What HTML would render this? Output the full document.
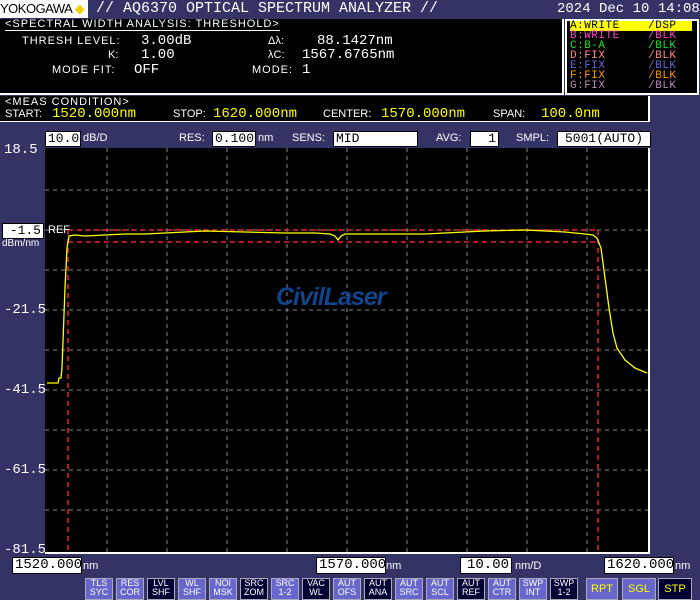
<!DOCTYPE html><html><head><style>
body{margin:0;width:700px;height:600px;background:#333366;position:relative;overflow:hidden;font-family:"Liberation Mono",monospace;color:#fff}
.a{position:absolute;white-space:pre}
.box{position:absolute;background:#fff;color:#000;border:1px solid #000;font-size:13px;line-height:14px;text-align:right;padding:0 2px}
.s{font-family:"Liberation Sans",sans-serif;font-size:11px}
.btn{position:absolute;top:578px;width:26px;height:20px;background:#6666cc;border:1px solid #aab;color:#fff;font-family:"Liberation Sans",sans-serif;font-size:9px;line-height:9px;text-align:center}
.d{background:#000033}
.y{color:#ffff00}
.lg div{height:10px;line-height:10px;font-family:"Liberation Mono",monospace;font-size:11px;letter-spacing:0.5px;white-space:pre}
</style></head><body>
<div class="a" style="left:0;top:0;width:88px;height:18px;background:#fff;color:#000;font-family:'Liberation Sans',sans-serif;font-size:13px;line-height:18px;letter-spacing:-0.5px">YOKOGAWA <span style="color:#f5d000">◆</span></div>
<div class="a" style="left:96px;top:0px;font-size:15px;line-height:18px">// AQ6370 OPTICAL SPECTRUM ANALYZER //</div>
<div class="a" style="left:557px;top:0px;font-size:14px;line-height:18px;letter-spacing:0px">2024 Dec 10 14:08</div>
<div class="a" style="left:0;top:19px;width:562px;height:74px;background:#000;border-right:2px solid #fff;border-bottom:2px solid #fff"></div>
<div class="a s" style="left:5px;top:18px;border-bottom:1px solid #fff;letter-spacing:1px">&lt;SPECTRAL WIDTH ANALYSIS: THRESHOLD&gt;</div>
<div class="a s" style="left:22px;top:35px;letter-spacing:1px">THRESH LEVEL:</div>
<div class="a" style="left:141px;top:33px;font-size:14px">3.00dB</div>
<div class="a s" style="left:108px;top:49px">K:</div>
<div class="a" style="left:141px;top:47px;font-size:14px">1.00</div>
<div class="a s" style="left:52px;top:64px;letter-spacing:1px">MODE FIT:</div>
<div class="a" style="left:134px;top:62px;font-size:14px">OFF</div>
<div class="a s" style="left:268px;top:35px">Δλ:</div>
<div class="a" style="left:317px;top:33px;font-size:14px">88.1427nm</div>
<div class="a s" style="left:268px;top:49px">λC:</div>
<div class="a" style="left:302px;top:47px;font-size:14px">1567.6765nm</div>
<div class="a s" style="left:252px;top:64px;letter-spacing:1px">MODE:</div>
<div class="a" style="left:302px;top:62px;font-size:14px">1</div>
<div class="a" style="left:565px;top:19px;width:130px;height:72px;background:#000;border:2px solid #fff"></div>
<div class="lg" style="position:absolute;left:570px;top:21px;width:122px"><div style="background:#ff0;color:#000">A:WRITE    /DSP</div><div style="color:#ff44cc">B:WRITE    /BLK</div><div style="color:#22dd22">C:B-A      /BLK</div><div style="color:#ff8888">D:FIX      /BLK</div><div style="color:#6666dd">E:FIX      /BLK</div><div style="color:#ff9900">F:FIX      /BLK</div><div style="color:#bb88bb">G:FIX      /BLK</div></div>
<div class="a" style="left:0;top:96px;width:648px;height:26px;background:#000;border-right:2px solid #fff"></div>
<div class="a s" style="left:5px;top:96px;letter-spacing:1px">&lt;MEAS CONDITION&gt;</div>
<div class="a" style="left:0;top:121px;width:650px;height:1px;background:#fff"></div>
<div class="a s" style="left:5px;top:108px">START:</div><div class="a y" style="left:52px;top:106px;font-size:14px">1520.000nm</div>
<div class="a s" style="left:173px;top:108px">STOP:</div><div class="a y" style="left:213px;top:106px;font-size:14px">1620.000nm</div>
<div class="a s" style="left:323px;top:108px">CENTER:</div><div class="a y" style="left:381px;top:106px;font-size:14px">1570.000nm</div>
<div class="a s" style="left:493px;top:108px">SPAN:</div><div class="a y" style="left:541px;top:106px;font-size:14px">100.0nm</div>
<div class="box" style="left:45px;top:131px;width:30px">10.0</div><div class="a s" style="left:83px;top:132px">dB/D</div>
<div class="a s" style="left:179px;top:132px">RES:</div><div class="box" style="left:212px;top:131px;width:38px">0.100</div><div class="a s" style="left:258px;top:132px">nm</div>
<div class="a s" style="left:292px;top:132px">SENS:</div><div class="box" style="left:333px;top:131px;width:79px;text-align:left">MID</div>
<div class="a s" style="left:436px;top:132px">AVG:</div><div class="box" style="left:470px;top:131px;width:23px">1</div>
<div class="a s" style="left:516px;top:132px">SMPL:</div><div class="box" style="left:557px;top:131px;width:88px;text-align:center">5001(AUTO)</div>
<svg class="a" style="left:45px;top:148px" width="606" height="406">
<rect x="0" y="0" width="604" height="404" fill="#000"/>
<g stroke="#888" stroke-width="1" stroke-dasharray="4,4">
<path d="M62 0V404M122 0V404M182 0V404M242 0V404M302 0V404M362 0V404M422 0V404M482 0V404M542 0V404"/>
<path d="M0 42H604M0 82H604M0 122H604M0 162H604M0 202H604M0 242H604M0 282H604M0 322H604M0 362H604"/>
</g>
<g stroke="#ee2222" stroke-width="1.5" stroke-dasharray="5,4" fill="none">
<path d="M23 82V404M553 82V404M23 82H553M23 94H553"/>
</g>
<path d="M604 0V405H0" stroke="#fff" stroke-width="2" fill="none"/>
<polyline fill="none" stroke="#ffff00" stroke-width="1.3" points="2,235 13,235 14,230 16,230 17,220 20,140 22,100 24,88 30,87 40,88 60,87 80,86 100,86 120,85 140,84 160,83 200,84 240,85 270,85 285,86 290,88 293,92 296,88 300,86 340,86 380,86 400,85 440,83 480,82 500,83 520,84 540,86 548,87 552,90 556,100 560,130 564,160 568,185 572,200 580,212 590,220 602,225"/>
</svg>
<div class="a" style="left:4px;top:142px;font-size:14px">18.5</div>
<div class="box" style="left:2px;top:223px;width:36px">-1.5</div>
<div class="a s" style="left:48px;top:224px">REF</div>
<div class="a s" style="left:2px;top:238px;font-size:10px">dBm/nm</div>
<div class="a" style="left:4px;top:302px;font-size:14px">-21.5</div>
<div class="a" style="left:4px;top:382px;font-size:14px">-41.5</div>
<div class="a" style="left:4px;top:462px;font-size:14px">-61.5</div>
<div class="a" style="left:4px;top:542px;font-size:14px">-81.5</div>
<div class="a" style="left:276px;top:283px;font-family:'Liberation Sans',sans-serif;font-weight:bold;font-style:italic;font-size:25px;color:#11448a;letter-spacing:-1px">CivilLaser</div>
<div class="box" style="left:12px;top:557px;width:64px;font-size:14px;line-height:15px">1520.000</div><div class="a s" style="left:83px;top:560px">nm</div>
<div class="box" style="left:316px;top:557px;width:64px;font-size:14px;line-height:15px">1570.000</div><div class="a s" style="left:386px;top:560px">nm</div>
<div class="box" style="left:460px;top:557px;width:46px;font-size:14px;line-height:15px">10.00</div><div class="a s" style="left:515px;top:560px">nm/D</div>
<div class="box" style="left:604px;top:557px;width:64px;font-size:14px;line-height:15px">1620.000</div><div class="a s" style="left:675px;top:560px">nm</div>
<div class="btn" style="left:85px">TLS<br>SYC</div>
<div class="btn" style="left:116px">RES<br>COR</div>
<div class="btn d" style="left:147px">LVL<br>SHF</div>
<div class="btn" style="left:178px">WL<br>SHF</div>
<div class="btn" style="left:209px">NOI<br>MSK</div>
<div class="btn d" style="left:240px">SRC<br>ZOM</div>
<div class="btn" style="left:271px">SRC<br>1-2</div>
<div class="btn d" style="left:302px">VAC<br>WL</div>
<div class="btn" style="left:333px">AUT<br>OFS</div>
<div class="btn d" style="left:364px">AUT<br>ANA</div>
<div class="btn" style="left:395px">AUT<br>SRC</div>
<div class="btn" style="left:426px">AUT<br>SCL</div>
<div class="btn d" style="left:457px">AUT<br>REF</div>
<div class="btn" style="left:488px">AUT<br>CTR</div>
<div class="btn" style="left:519px">SWP<br>INT</div>
<div class="btn d" style="left:550px">SWP<br>1-2</div>
<div class="btn y" style="left:586px;width:30px;font-size:11px;line-height:20px">RPT</div>
<div class="btn y" style="left:622px;width:32px;font-size:11px;line-height:20px">SGL</div>
<div class="btn d y" style="left:658px;width:32px;font-size:11px;line-height:20px">STP</div>
</body></html>
